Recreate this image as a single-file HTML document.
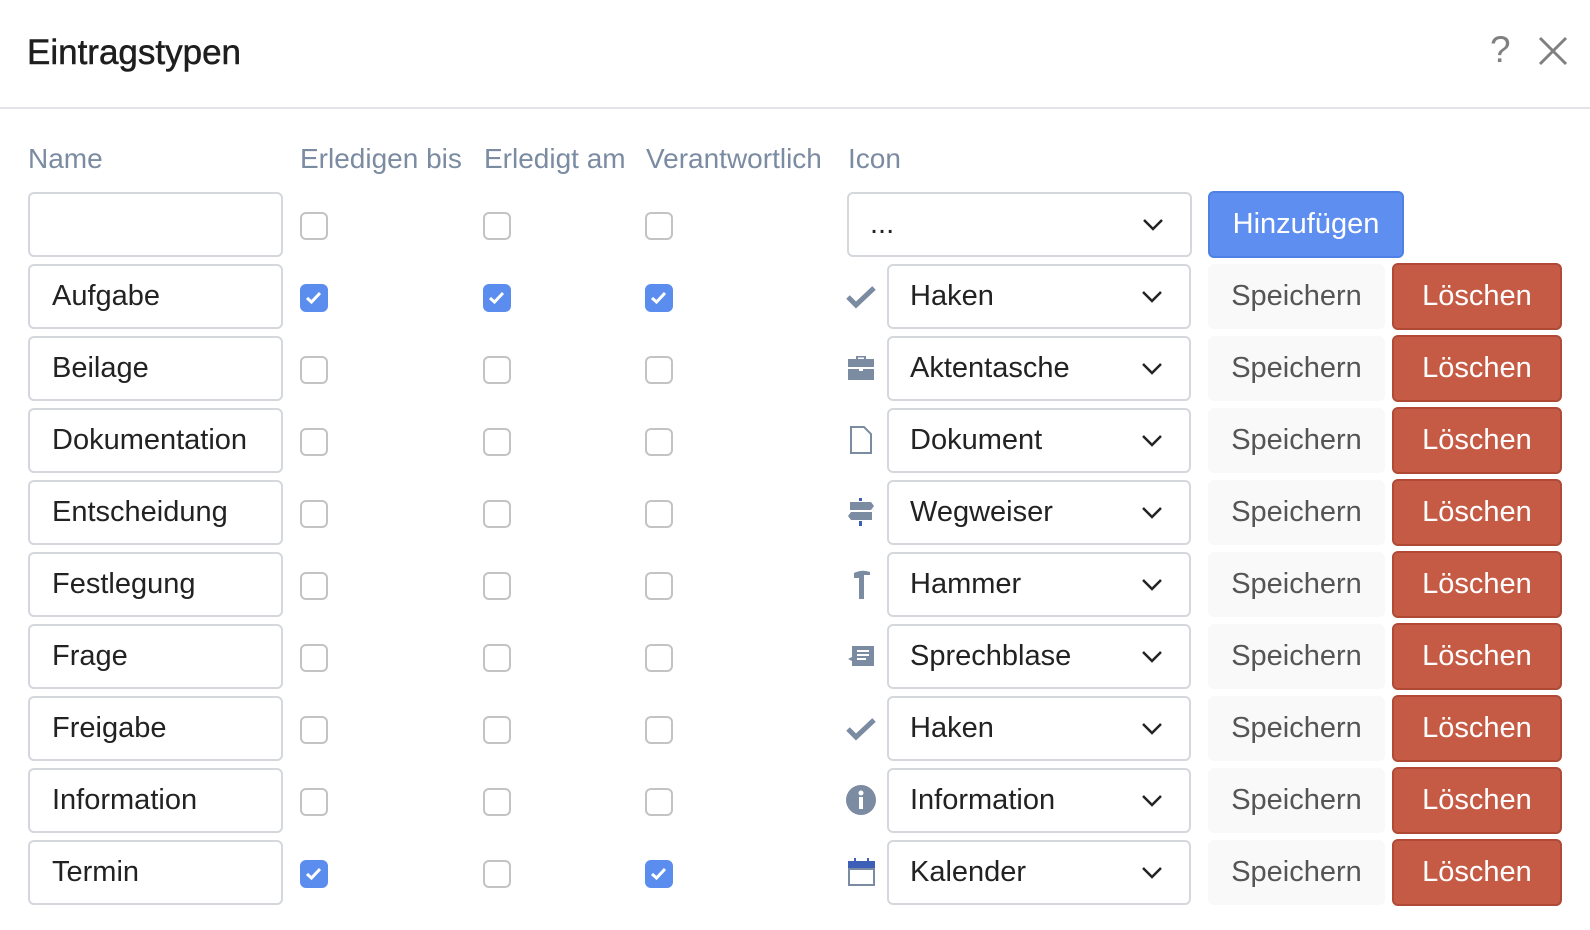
<!DOCTYPE html>
<html><head><meta charset="utf-8"><style>
*{box-sizing:border-box;margin:0;padding:0}
body{width:1590px;height:930px;background:#fff;font-family:"Liberation Sans",sans-serif;position:relative;overflow:hidden;color:#222}
.title{position:absolute;left:27px;top:33px;font-size:35px;color:#1e1e1e;-webkit-text-stroke:0.5px #1e1e1e}
.hdr{position:absolute;left:0;right:0;top:107px;border-top:2px solid #e2e4e7}
.q{position:absolute;left:1490px;top:29px;font-size:37px;color:#808080}
.lbl{position:absolute;top:143px;font-size:28px;color:#7b8ba1}
.row{position:absolute;left:0;width:1590px;height:65px}
.inp{position:absolute;left:28px;top:0;width:255px;height:65px;border:2px solid #d4d7db;border-radius:6px;font-size:29px;padding-left:22px;line-height:61px}
.cb{position:absolute;top:20px;width:28px;height:28px;border:2px solid #c3c3c3;border-radius:6px;background:#fff}
.cb.on{background:#5b8dee;border-color:#5b8dee}
.cb.on svg{position:absolute;left:3px;top:4px}
.sel{position:absolute;left:887px;top:0;width:304px;height:65px;border:2px solid #d4d7db;border-radius:6px;font-size:29px;padding-left:21px;line-height:61px}
.sel svg{position:absolute;right:26px;top:24px}
.ic{position:absolute;left:846px;top:17px;width:30px;height:30px}
.sp{position:absolute;left:1208px;top:0;width:177px;height:65px;background:#f9f9f9;border-radius:6px;font-size:29px;color:#555;text-align:center;line-height:65px}
.del{position:absolute;left:1392px;top:-1px;width:170px;height:67px;background:#c65b45;border:2px solid #b04a36;border-radius:6px;font-size:29px;color:#fff;text-align:center;line-height:63px}
.add{position:absolute;left:1208px;top:-1px;width:196px;height:67px;background:#5e8ef0;border:2px solid #4f80e6;border-radius:6px;font-size:29px;color:#fff;text-align:center;line-height:63px}
</style></head><body>
<div class="title">Eintragstypen</div>
<div class="q">?</div>
<svg style="position:absolute;left:1538px;top:36px" width="30" height="30"><path d="M2 2L28 28M28 2L2 28" stroke="#808080" stroke-width="3"/></svg>
<div class="hdr"></div>
<div class="lbl" style="left:28px">Name</div>
<div class="lbl" style="left:300px">Erledigen bis</div>
<div class="lbl" style="left:484px">Erledigt am</div>
<div class="lbl" style="left:646px">Verantwortlich</div>
<div class="lbl" style="left:848px">Icon</div>

<div class="row" style="top:192px">
<div class="inp"></div>
<div class="cb" style="left:300px"></div><div class="cb" style="left:483px"></div><div class="cb" style="left:645px"></div>
<div class="sel" style="left:847px;width:345px">...<svg width="22" height="14"><path d="M2 2L11 11L20 2" stroke="#222" stroke-width="2.5" fill="none"/></svg></div>
<div class="add">Hinzufügen</div>
</div>

<div class="row" style="top:264px"><div class="inp">Aufgabe</div>
<div class="cb on" style="left:300px"><svg width="17" height="15"><path d="M2 8L6.5 12L15 3" stroke="#fff" stroke-width="3" fill="none"/></svg></div>
<div class="cb on" style="left:483px"><svg width="17" height="15"><path d="M2 8L6.5 12L15 3" stroke="#fff" stroke-width="3" fill="none"/></svg></div>
<div class="cb on" style="left:645px"><svg width="17" height="15"><path d="M2 8L6.5 12L15 3" stroke="#fff" stroke-width="3" fill="none"/></svg></div>
<svg class="ic" viewBox="0 0 30 30"><path d="M2 16L10 24L28 7" stroke="#7b8ba1" stroke-width="5" fill="none"/></svg>
<div class="sel">Haken<svg width="22" height="14"><path d="M2 2L11 11L20 2" stroke="#222" stroke-width="2.5" fill="none"/></svg></div>
<div class="sp">Speichern</div><div class="del">Löschen</div></div>

<div class="row" style="top:336px"><div class="inp">Beilage</div>
<div class="cb" style="left:300px"></div><div class="cb" style="left:483px"></div><div class="cb" style="left:645px"></div>
<svg class="ic" viewBox="0 0 30 30"><path d="M10 6V3H20V6H28V14H2V6ZM12 6H18V4.5H12Z" fill="#7b8ba1" fill-rule="evenodd"/><path d="M2 16H13V18H17V16H28V27H2Z" fill="#7b8ba1"/></svg>
<div class="sel">Aktentasche<svg width="22" height="14"><path d="M2 2L11 11L20 2" stroke="#222" stroke-width="2.5" fill="none"/></svg></div>
<div class="sp">Speichern</div><div class="del">Löschen</div></div>

<div class="row" style="top:408px"><div class="inp">Dokumentation</div>
<div class="cb" style="left:300px"></div><div class="cb" style="left:483px"></div><div class="cb" style="left:645px"></div>
<svg class="ic" viewBox="0 0 30 30"><path d="M5 2H18L25 9V28H5Z" stroke="#7b8ba1" stroke-width="2" fill="none"/></svg>
<div class="sel">Dokument<svg width="22" height="14"><path d="M2 2L11 11L20 2" stroke="#222" stroke-width="2.5" fill="none"/></svg></div>
<div class="sp">Speichern</div><div class="del">Löschen</div></div>

<div class="row" style="top:480px"><div class="inp">Entscheidung</div>
<div class="cb" style="left:300px"></div><div class="cb" style="left:483px"></div><div class="cb" style="left:645px"></div>
<svg class="ic" viewBox="0 0 30 30"><path d="M4 5H25L28 9L25 13H4Z M26 15H5L2 19L5 23H26Z" fill="#7b8ba1"/><rect x="13" y="1" width="3" height="3" fill="#3d5fb8"/><rect x="13" y="24" width="3" height="5" fill="#3d5fb8"/></svg>
<div class="sel">Wegweiser<svg width="22" height="14"><path d="M2 2L11 11L20 2" stroke="#222" stroke-width="2.5" fill="none"/></svg></div>
<div class="sp">Speichern</div><div class="del">Löschen</div></div>

<div class="row" style="top:552px"><div class="inp">Festlegung</div>
<div class="cb" style="left:300px"></div><div class="cb" style="left:483px"></div><div class="cb" style="left:645px"></div>
<svg class="ic" viewBox="0 0 30 30"><path d="M8 4Q16 0 24 3L24 6L18 6L18 30L13 30L13 9L8 9Z" fill="#7b8ba1"/></svg>
<div class="sel">Hammer<svg width="22" height="14"><path d="M2 2L11 11L20 2" stroke="#222" stroke-width="2.5" fill="none"/></svg></div>
<div class="sp">Speichern</div><div class="del">Löschen</div></div>

<div class="row" style="top:624px"><div class="inp">Frage</div>
<div class="cb" style="left:300px"></div><div class="cb" style="left:483px"></div><div class="cb" style="left:645px"></div>
<svg class="ic" viewBox="0 0 30 30"><path d="M6 5H28V25H6V20L2 18L6 16Z" fill="#7b8ba1"/><path d="M11 10H23M11 14H23M11 18H20" stroke="#fff" stroke-width="2"/></svg>
<div class="sel">Sprechblase<svg width="22" height="14"><path d="M2 2L11 11L20 2" stroke="#222" stroke-width="2.5" fill="none"/></svg></div>
<div class="sp">Speichern</div><div class="del">Löschen</div></div>

<div class="row" style="top:696px"><div class="inp">Freigabe</div>
<div class="cb" style="left:300px"></div><div class="cb" style="left:483px"></div><div class="cb" style="left:645px"></div>
<svg class="ic" viewBox="0 0 30 30"><path d="M2 16L10 24L28 7" stroke="#7b8ba1" stroke-width="5" fill="none"/></svg>
<div class="sel">Haken<svg width="22" height="14"><path d="M2 2L11 11L20 2" stroke="#222" stroke-width="2.5" fill="none"/></svg></div>
<div class="sp">Speichern</div><div class="del">Löschen</div></div>

<div class="row" style="top:768px"><div class="inp">Information</div>
<div class="cb" style="left:300px"></div><div class="cb" style="left:483px"></div><div class="cb" style="left:645px"></div>
<svg class="ic" viewBox="0 0 30 30"><circle cx="15" cy="15" r="15" fill="#7b8ba1"/><circle cx="15" cy="8" r="2.5" fill="#fff"/><rect x="13" y="12" width="4" height="12" fill="#fff"/></svg>
<div class="sel">Information<svg width="22" height="14"><path d="M2 2L11 11L20 2" stroke="#222" stroke-width="2.5" fill="none"/></svg></div>
<div class="sp">Speichern</div><div class="del">Löschen</div></div>

<div class="row" style="top:840px"><div class="inp">Termin</div>
<div class="cb on" style="left:300px"><svg width="17" height="15"><path d="M2 8L6.5 12L15 3" stroke="#fff" stroke-width="3" fill="none"/></svg></div>
<div class="cb" style="left:483px"></div>
<div class="cb on" style="left:645px"><svg width="17" height="15"><path d="M2 8L6.5 12L15 3" stroke="#fff" stroke-width="3" fill="none"/></svg></div>
<svg class="ic" viewBox="0 0 30 30"><rect x="2" y="4" width="27" height="9" fill="#3d5fb8"/><rect x="8" y="1" width="2" height="4" fill="#3d5fb8"/><rect x="21" y="1" width="2" height="4" fill="#3d5fb8"/><rect x="3" y="12" width="25" height="16" stroke="#7b8ba1" stroke-width="2" fill="none"/></svg>
<div class="sel">Kalender<svg width="22" height="14"><path d="M2 2L11 11L20 2" stroke="#222" stroke-width="2.5" fill="none"/></svg></div>
<div class="sp">Speichern</div><div class="del">Löschen</div></div>
</body></html>
